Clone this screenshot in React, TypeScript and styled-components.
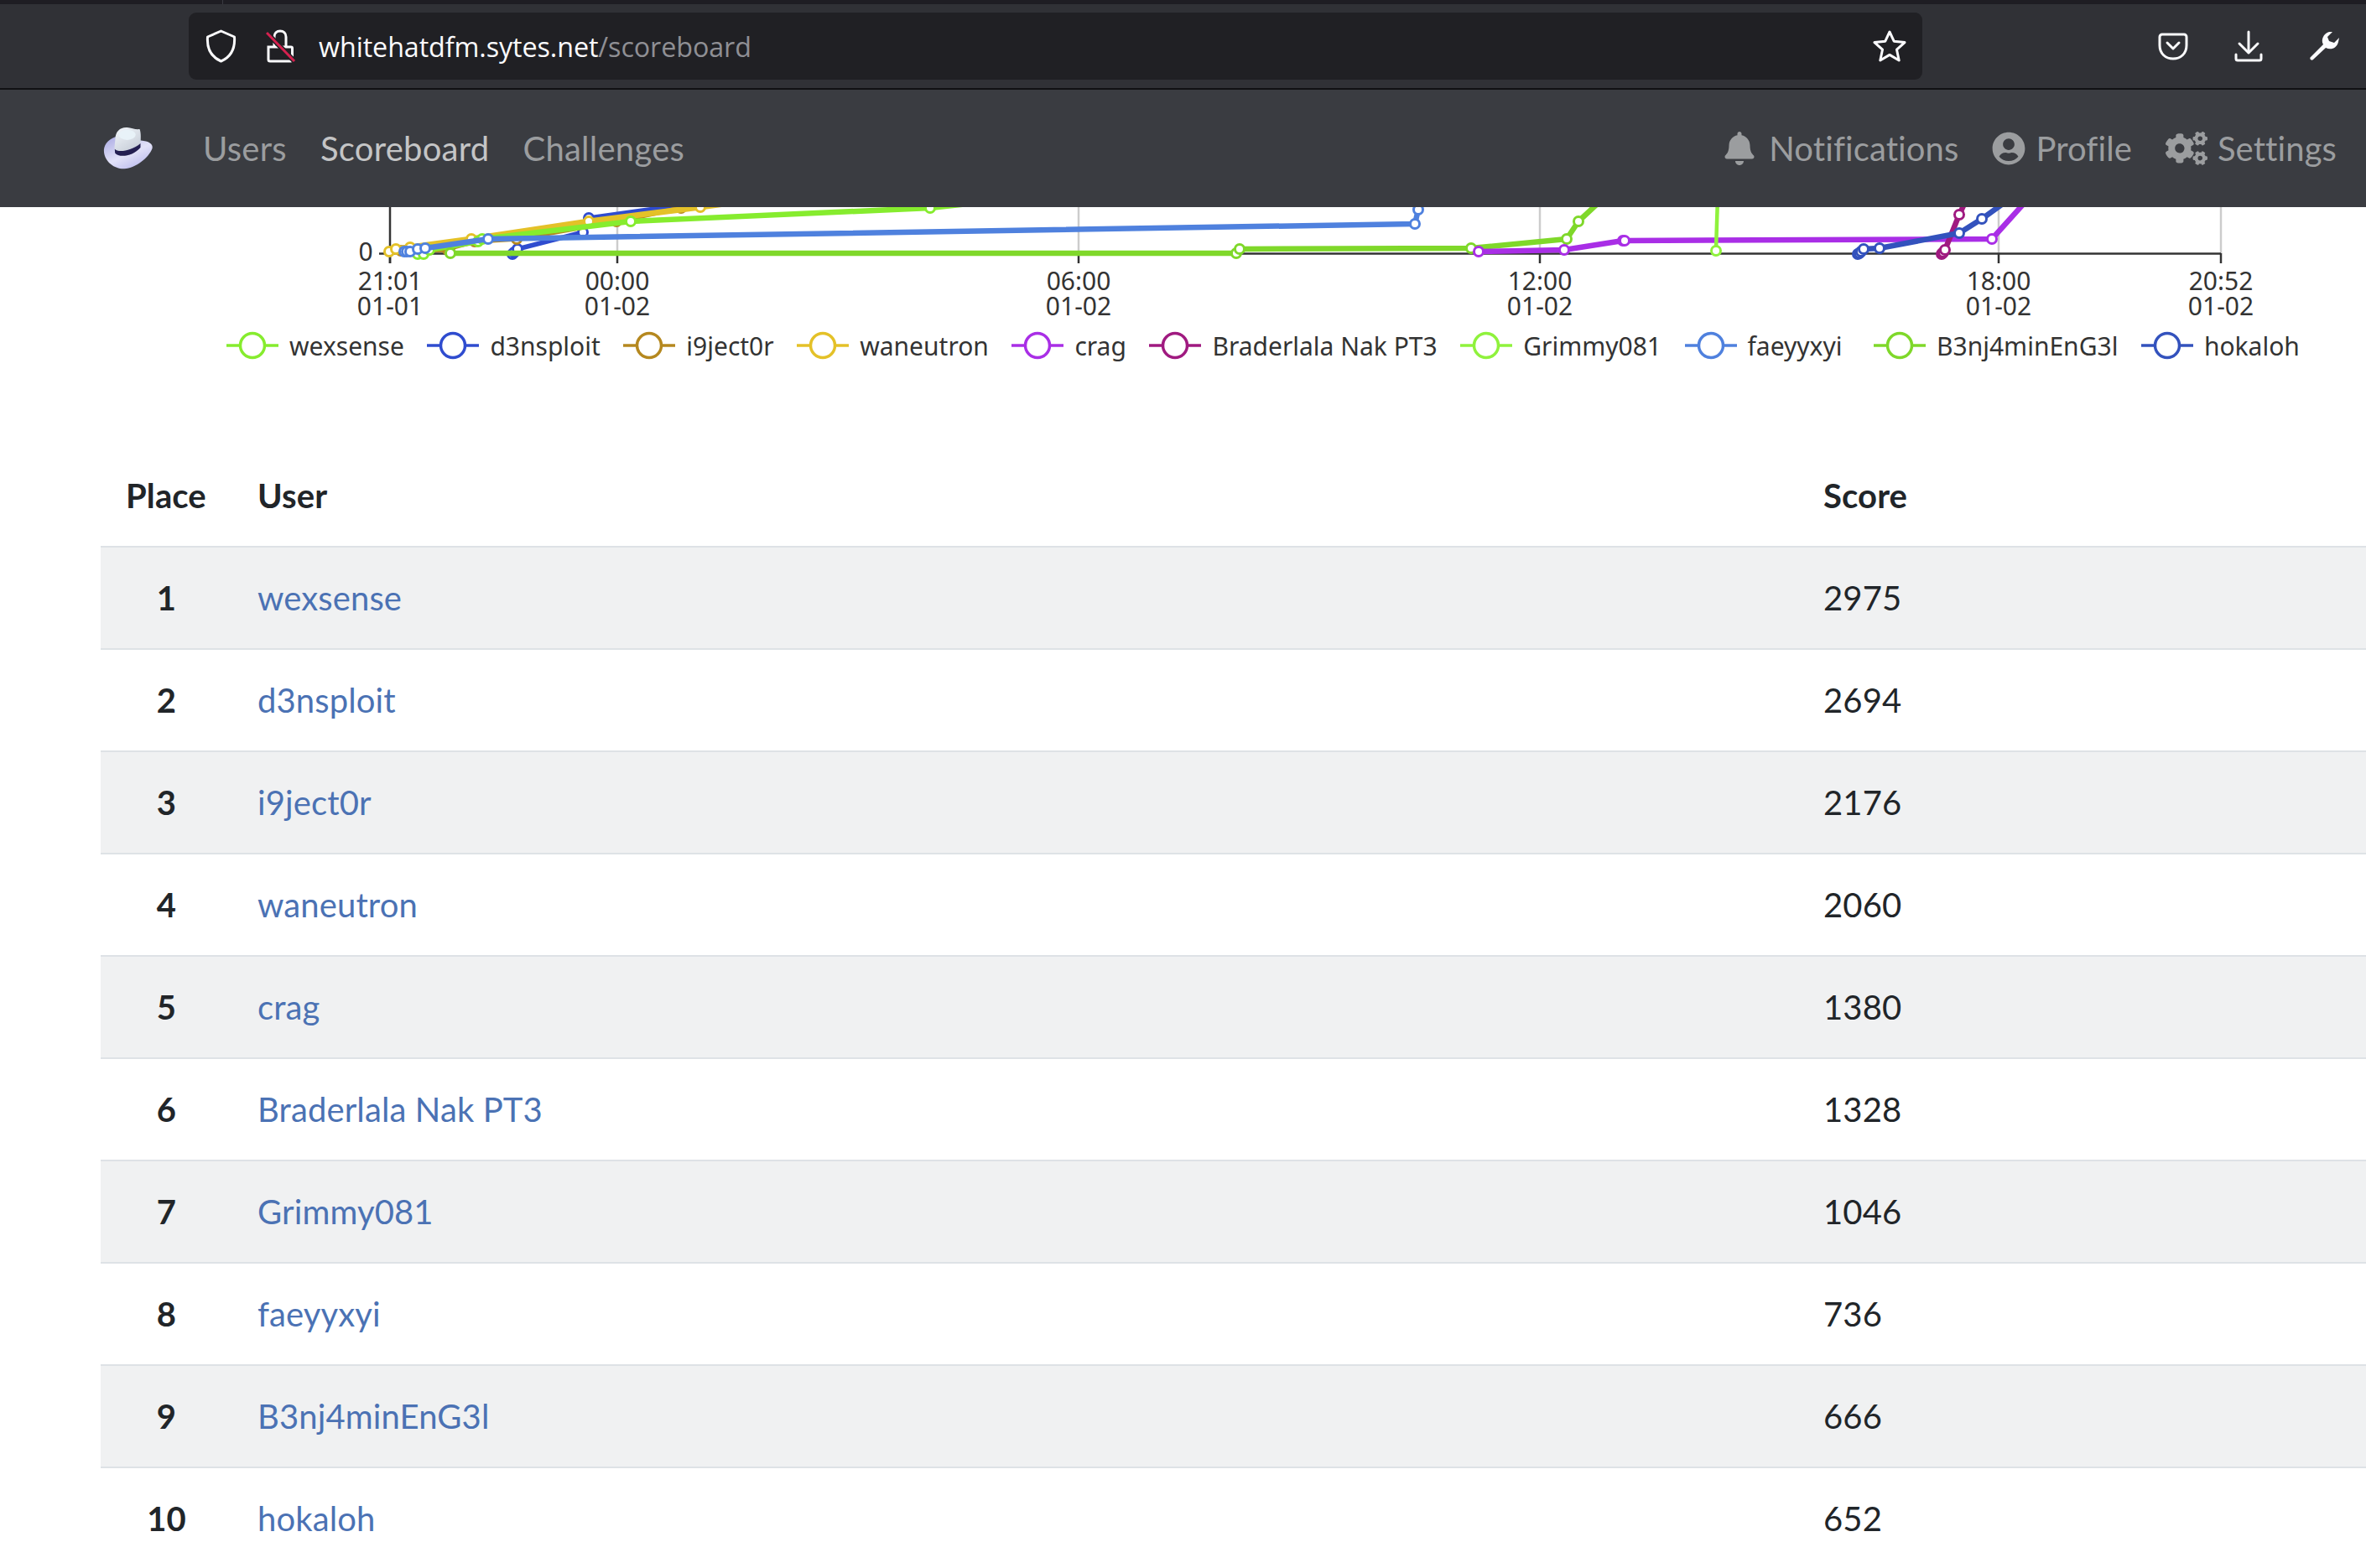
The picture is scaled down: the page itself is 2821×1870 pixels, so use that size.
import React from "react";
import styled, { createGlobalStyle } from "styled-components";
import { FaBell, FaUserCircle, FaCogs } from "react-icons/fa";

const GlobalStyle = createGlobalStyle`
    html, body {
        margin: 0;
        padding: 0;
        background: #fff;
    }
    body {
        font-family: "Lato", "Liberation Sans", sans-serif;
        color: #212529;
    }
    #root {
        height: 100vh;
        overflow: hidden;
    }
`;

const TopStrip = styled.div`
    height: 5px;
    background: #1e1d23;
    position: relative;

    &::after {
        content: "";
        position: absolute;
        left: 265px;
        top: 0;
        width: 1px;
        height: 5px;
        background: #3a3a42;
    }
`;

const BrowserBar = styled.div`
    height: 100px;
    box-sizing: border-box;
    background: #303136;
    display: flex;
    align-items: center;
    padding-left: 225px;
`;

const BarRule = styled.div`
    height: 2px;
    background: #111114;
`;

const AddressBox = styled.div`
    width: 2067px;
    height: 80px;
    box-sizing: border-box;
    background: #202024;
    border-radius: 9px;
    display: flex;
    align-items: center;
    padding: 0 19px 0 20px;
    flex-shrink: 0;
`;

const AddressText = styled.div`
    margin-left: 27px;
    font-family: "Open Sans", "Noto Sans", sans-serif;
    font-size: 32.3px;
    color: #fbfbfe;
    flex: 1;
    white-space: nowrap;
    letter-spacing: -0.1px;
`;

const AddressPath = styled.span`
    color: #8f8f94;
`;

const LockSlot = styled.span`
    display: flex;
    margin-left: 35px;
`;

const ToolIcons = styled.div`
    display: flex;
    align-items: center;
    margin-left: 281px;
    gap: 55px;
`;

const Glyph = styled.svg`
    display: block;
    flex-shrink: 0;
`;

const Navbar = styled.nav`
    height: 140px;
    background: #3a3c41;
    display: flex;
    align-items: center;
    padding: 0 15px 0 122px;
`;

const Brand = styled.a`
    display: block;
    width: 62px;
    height: 54px;
    margin-right: 38px;
`;

const NavList = styled.div`
    display: flex;
    align-items: center;
    margin-left: ${(props) => (props.$right ? "auto" : "0")};
    letter-spacing: ${(props) => (props.$right ? "0.1px" : "0.25px")};
`;

const NavLink = styled.a`
    display: flex;
    align-items: center;
    gap: ${(props) => props.$gap || "12px"};
    padding: 0 20px;
    font-size: 40px;
    line-height: 60px;
    color: ${(props) => (props.$active ? "#c4c5c6" : "#9b9d9f")};
    white-space: nowrap;

    svg {
        display: block;
    }
`;

const ChartBlock = styled.section`
    height: 284px;
    overflow: hidden;
`;

const ChartSvg = styled.svg`
    display: block;
`;

const AxisText = styled.text`
    font-family: "Noto Sans", "Open Sans", sans-serif;
    font-size: 30px;
    fill: #333;
    text-anchor: middle;
`;

const Legend = styled.div`
    display: flex;
    align-items: center;
    height: 56px;
    padding-left: 270px;
    gap: 27.5px;
`;

const LegendItem = styled.div`
    display: flex;
    align-items: center;
    gap: 13px;
    padding-right: ${(props) => (props.$roomy ? "10px" : "0")};
    font-family: "Noto Sans", "Open Sans", sans-serif;
    font-size: 30px;
    color: #333;
    white-space: nowrap;
`;

const ScoreTable = styled.table`
    margin-left: 120px;
    width: 2701px;
    table-layout: fixed;
    border-collapse: separate;
    border-spacing: 0;
    font-size: 40px;
    line-height: 60px;
    letter-spacing: 0.12px;
`;

const HeadCell = styled.th`
    padding: 30px;
    text-align: left;
    font-weight: 700;
    border-bottom: 2px solid #dee2e6;
`;

const Row = styled.tr`
    background: ${(props) => (props.$striped ? "#f0f1f2" : "#fff")};
`;

const Cell = styled.td`
    padding: 30px;
    border-bottom: 2px solid #dee2e6;
`;

const PlaceCell = styled(Cell)`
    font-weight: 700;
    text-align: center;
`;

const UserLink = styled.a`
    color: #4b72b4;
`;

const players = [
    { name: "wexsense", score: 2975, color: "#86ec2e" },
    { name: "d3nsploit", score: 2694, color: "#2f4ccf" },
    { name: "i9ject0r", score: 2176, color: "#b5881f" },
    { name: "waneutron", score: 2060, color: "#e4c128" },
    { name: "crag", score: 1380, color: "#a92ee6" },
    { name: "Braderlala Nak PT3", score: 1328, color: "#a01a80" },
    { name: "Grimmy081", score: 1046, color: "#8ff23c" },
    { name: "faeyyxyi", score: 736, color: "#4f81de" },
    { name: "B3nj4minEnG3l", score: 666, color: "#7fd82a" },
    { name: "hokaloh", score: 652, color: "#3352bd" },
];

type Line = { color: string; width: number; points: number[][] };

// page coordinates, the svg starts right under the navbar; the last point of each is off the top
const lines: Line[] = [
    {
        color: "#2f4ccf",
        width: 5.5,
        points: [[611, 303], [613, 301], [617, 297], [695, 277], [702, 260], [860, 238]],
    },
    {
        color: "#b5881f",
        width: 5.5,
        points: [[478, 299], [483, 299], [534, 298], [536, 296], [566, 288], [616, 285], [735, 264], [812, 248], [900, 230]],
    },
    {
        color: "#e4c128",
        width: 7,
        points: [[464, 300], [472, 297], [489, 295], [562, 285], [702, 264], [835, 247], [900, 238]],
    },
    {
        color: "#86ec2e",
        width: 6.5,
        points: [[498, 303], [505, 303], [512, 298], [570, 288], [575, 285], [752, 264], [1109, 248], [1200, 238]],
    },
    {
        color: "#4f81de",
        width: 6.5,
        points: [[482, 300], [485, 300], [489, 300], [498, 297], [507, 296], [582, 285], [1687, 267], [1691, 250], [1693, 235]],
    },
    {
        color: "#7fd82a",
        width: 6.5,
        points: [[537, 302], [1474, 302], [1478, 297], [1754, 296], [1868, 285], [1882, 264], [1910, 238]],
    },
    {
        color: "#a92ee6",
        width: 6.5,
        points: [[1763, 300], [1865, 298], [1935, 287], [1937, 287], [2375, 285], [2420, 235]],
    },
    {
        color: "#8ff23c",
        width: 4.5,
        points: [[2046, 299], [2048, 235]],
    },
    {
        color: "#a01a80",
        width: 6.5,
        points: [[2315, 303], [2316, 302], [2317, 301], [2319, 298], [2336, 256], [2346, 235]],
    },
    {
        color: "#3352bd",
        width: 6.5,
        points: [[2215, 303], [2217, 302], [2219, 300], [2222, 297], [2241, 296], [2336, 278], [2363, 261], [2395, 238]],
    },
];

const gridTicks = [736, 1286, 1836, 2383, 2648];

const timeLabels = [
    { x: 465, time: "21:01", date: "01-01" },
    { x: 736, time: "00:00", date: "01-02" },
    { x: 1286, time: "06:00", date: "01-02" },
    { x: 1836, time: "12:00", date: "01-02" },
    { x: 2383, time: "18:00", date: "01-02" },
    { x: 2648, time: "20:52", date: "01-02" },
];

const HatLogo = () => (
    <Glyph width="62" height="54" viewBox="62 76 184 160">
        <defs>
            <linearGradient id="brimFill" x1="0" y1="0" x2="0.7" y2="1">
                <stop offset="0" stopColor="#a9a9e2" />
                <stop offset="0.6" stopColor="#e2e2f8" />
                <stop offset="1" stopColor="#bcbcee" />
            </linearGradient>
            <linearGradient id="crownFill" x1="0" y1="0" x2="0.6" y2="1">
                <stop offset="0" stopColor="#f3f7fb" />
                <stop offset="1" stopColor="#c4cbd6" />
            </linearGradient>
        </defs>
        <path d="M108 115C80 126 65 146 68 170C72 205 108 230 140 228C180 225 226 190 239 155C242 140 226 130 198 128Z" fill="url(#brimFill)" />
        <path d="M108 122C108 96 126 80 150 82C165 84 180 90 194 88C200 100 198 128 197 142C190 165 162 182 138 182C116 182 105 170 105 152Z" fill="url(#crownFill)" />
        <path d="M106 158C118 172 165 165 197 138L197 153C170 185 120 190 107 172Z" fill="#241f52" />
        <ellipse cx="150" cy="108" rx="30" ry="18" fill="#e8f2f8" />
    </Glyph>
);

const ShieldIcon = () => (
    <Glyph width="37" height="40" viewBox="0 0 37 40" fill="none" stroke="#fbfbfe" strokeWidth="3" strokeLinejoin="round">
        <path d="M18.5 2L34.5 9C35.5 23 30 33 18.5 38C7 33 1.5 23 2.5 9Z" />
    </Glyph>
);

const LockIcon = () => (
    <Glyph width="36" height="40" viewBox="0 0 36 40" fill="none">
        <path d="M3 21H30a1.5 1.5 0 0 1 1.5 1.5V36a2 2 0 0 1-2 2H5a2 2 0 0 1-2-2Z" stroke="#fbfbfe" strokeWidth="3" />
        <path d="M10 20V9C10 4.5 13 2 17 2C21 2 24 4.5 24 9V20" stroke="#fbfbfe" strokeWidth="3" />
        <path d="M1 4L34 38" stroke="#202024" strokeWidth="6" />
        <path d="M1 4L34 38" stroke="#d5214f" strokeWidth="3" />
    </Glyph>
);

const StarIcon = () => (
    <Glyph width="40" height="38" viewBox="0 0 40 38" fill="none" stroke="#fbfbfe" strokeWidth="3" strokeLinejoin="round">
        <path d="M20 2L25.2 13.2L38 14.6L28.5 23.2L31.2 36L20 29.4L8.8 36L11.5 23.2L2 14.6L14.8 13.2Z" />
    </Glyph>
);

const PocketIcon = () => (
    <Glyph width="36" height="33" viewBox="0 0 36 33" fill="none" stroke="#fbfbfe" strokeWidth="3" strokeLinecap="round" strokeLinejoin="round">
        <path d="M5 2H31a3 3 0 0 1 3 3V15C34 25 27 31 18 31C9 31 2 25 2 15V5a3 3 0 0 1 3-3Z" />
        <path d="M11 12L18 19L25 12" />
    </Glyph>
);

const DownloadIcon = () => (
    <Glyph width="34" height="38" viewBox="0 0 34 38" fill="none" stroke="#fbfbfe" strokeWidth="3" strokeLinecap="round" strokeLinejoin="round">
        <path d="M17 2V26" />
        <path d="M6 16L17 27L28 16" />
        <path d="M2 29V34a2 2 0 0 0 2 2H30a2 2 0 0 0 2-2V29" />
    </Glyph>
);

const WrenchIcon = () => (
    <Glyph width="37" height="36" viewBox="0 0 37 36">
        <path d="M24 1C17 3 14 11 17 16L2 31C0 33 3 36 5 34L20 20C26 23 33 21 35 13L36 8L30 14L24 12L22 7L28 1Z" fill="#fbfbfe" />
    </Glyph>
);

const LegendIcon = ({ color }: { color: string }) => (
    <Glyph width="62" height="34" viewBox="0 0 62 34">
        <path d="M0 17H62" stroke={color} strokeWidth="3.5" />
        <circle cx="31" cy="17" r="14.5" fill="#fff" stroke={color} strokeWidth="3.5" />
    </Glyph>
);

const ScoreChart = () => (
    <ChartSvg width="2821" height="137" viewBox="0 247 2821 137">
        {gridTicks.map((x) => (
            <path key={x} d={`M${x} 247V303`} stroke="#cccccc" strokeWidth="2.5" />
        ))}
        <path d="M465 247V314M452 302.5H2648" stroke="#333" strokeWidth="2.5" fill="none" />
        {timeLabels.map((t) => (
            <path key={t.x} d={`M${t.x} 302V314`} stroke="#333" strokeWidth="2.5" />
        ))}
        {lines.map((l) => (
            <g key={l.color}>
                <polyline
                    points={l.points.map((p) => p.join(",")).join(" ")}
                    fill="none"
                    stroke={l.color}
                    strokeWidth={l.width}
                    strokeLinejoin="round"
                />
                {l.points.slice(0, -1).map((p) => (
                    <circle key={p.join()} cx={p[0]} cy={p[1]} r="5.5" fill="#fff" stroke={l.color} strokeWidth="3" />
                ))}
            </g>
        ))}
        <AxisText x="436" y="311">0</AxisText>
        {timeLabels.map((t) => (
            <AxisText key={t.time} y="346">
                <tspan x={t.x}>{t.time}</tspan>
                <tspan x={t.x} dy="30">{t.date}</tspan>
            </AxisText>
        ))}
    </ChartSvg>
);

const App = () => (
    <>
        <GlobalStyle />
        <TopStrip />
        <BrowserBar>
            <AddressBox>
                <ShieldIcon />
                <LockSlot><LockIcon /></LockSlot>
                <AddressText>
                    whitehatdfm.sytes.net<AddressPath>/scoreboard</AddressPath>
                </AddressText>
                <StarIcon />
            </AddressBox>
            <ToolIcons>
                <PocketIcon />
                <DownloadIcon />
                <WrenchIcon />
            </ToolIcons>
        </BrowserBar>
        <BarRule />
        <Navbar>
            <Brand><HatLogo /></Brand>
            <NavList>
                <NavLink>Users</NavLink>
                <NavLink $active>Scoreboard</NavLink>
                <NavLink>Challenges</NavLink>
            </NavList>
            <NavList $right>
                <NavLink $gap="15px"><FaBell size={40} />Notifications</NavLink>
                <NavLink><FaUserCircle size={40} />Profile</NavLink>
                <NavLink><FaCogs size={50} />Settings</NavLink>
            </NavList>
        </Navbar>
        <ChartBlock>
            <ScoreChart />
            <Legend>
                {players.map((p) => (
                    <LegendItem key={p.name} $roomy={p.name === "faeyyxyi"}>
                        <LegendIcon color={p.color} />
                        {p.name}
                    </LegendItem>
                ))}
            </Legend>
        </ChartBlock>
        <ScoreTable>
            <colgroup>
                <col width="157" />
                <col width="1867" />
                <col width="677" />
            </colgroup>
            <thead>
                <tr>
                    <HeadCell>Place</HeadCell>
                    <HeadCell>User</HeadCell>
                    <HeadCell>Score</HeadCell>
                </tr>
            </thead>
            <tbody>
                {players.map((p, i) => (
                    <Row key={p.name} $striped={i % 2 === 0}>
                        <PlaceCell>{i + 1}</PlaceCell>
                        <Cell><UserLink>{p.name}</UserLink></Cell>
                        <Cell>{p.score}</Cell>
                    </Row>
                ))}
            </tbody>
        </ScoreTable>
    </>
);

export default App;
